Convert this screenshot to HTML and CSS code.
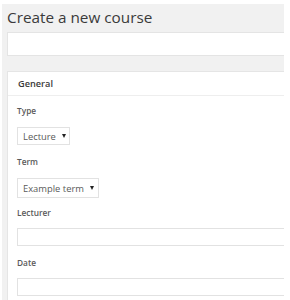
FILE: index.html
```html
<!DOCTYPE html>
<html>
<head>
    <title>Create a new course</title>
    <meta http-equiv="Content-Type" content="text/html; charset=utf-8"/>
    <link rel="stylesheet" href="styles.css">
</head>
<body>
    <div class="wrap">
        <h1>Create a new course</h1>
        <div class="title-input"></div>
        <div class="postbox">
            <div class="hndle">General</div>
            <div class="inside">
                <div class="label label-type">Type</div>
                <div class="select select-type">Lecture <span class="arrow"></span></div>
                <div class="label label-term">Term</div>
                <div class="select select-term">Example term <span class="arrow"></span></div>
                <div class="label label-lecturer">Lecturer</div>
                <div class="field"></div>
                <div class="label label-date">Date</div>
                <div class="field"></div>
            </div>
        </div>
    </div>
</body>
</html>
```

FILE: styles.css
```css
html {
    height: 100%;
}

body {
    height: 100%;
    margin: 0;
    padding: 0;
    overflow: hidden;
    background: #ffffff;
    font-family: 'Open Sans', sans-serif;
    color: #444444;
}

.wrap {
    display: flex;
    flex-direction: column;
    box-sizing: border-box;
    margin: 4px 0 0 2px;
    width: 282px;
    height: calc(100% - 4px);
    padding: 1px 0 0 5px;
    background: #f1f1f1;
    overflow: hidden;
}

h1 {
    margin: 0 0 3px 0;
    font-size: 15.3px;
    line-height: 24px;
    font-weight: normal;
    color: #3a3a3a;
}

.title-input {
    flex: none;
    height: 22px;
    background: #ffffff;
    border: 1px solid #e4e4e4;
    border-right: none;
}

.postbox {
    flex: 1;
    margin-top: 15px;
    background: #ffffff;
    border: 1px solid #e5e5e5;
    border-right: none;
    border-bottom: none;
    overflow: hidden;
}

.hndle {
    height: 23px;
    line-height: 23px;
    padding-left: 10px;
    font-size: 9.2px;
    font-weight: 600;
    color: #3a3a3a;
    border-bottom: 1px solid #eeeeee;
}

.inside {
    padding: 8px 0 0 9px;
}

.label {
    height: 14px;
    line-height: 14px;
    font-size: 8.3px;
    font-weight: 600;
    color: #5a5a5a;
}

.select {
    display: inline-flex;
    align-items: center;
    box-sizing: border-box;
    height: 18px;
    padding: 0 0 0 5px;
    margin-top: 9px;
    font-size: 9.4px;
    color: #5a5a5a;
    border: 1px solid #e2e2e2;
    background: #ffffff;
}

.select-type {
    width: 53px;
}

.select-term {
    width: 82px;
    height: 20px;
}

.arrow {
    display: inline-block;
    width: 0;
    height: 0;
    margin-left: 6px;
    border-left: 2.5px solid transparent;
    border-right: 2.5px solid transparent;
    border-top: 4px solid #222222;
}

.label-term {
    margin-top: 10px;
}

.label-lecturer {
    margin-top: 8px;
}

.label-date {
    margin-top: 10px;
}

.field {
    box-sizing: border-box;
    height: 18px;
    margin-top: 8px;
    border: 1px solid #e2e2e2;
    border-right: none;
    background: #ffffff;
}
```
